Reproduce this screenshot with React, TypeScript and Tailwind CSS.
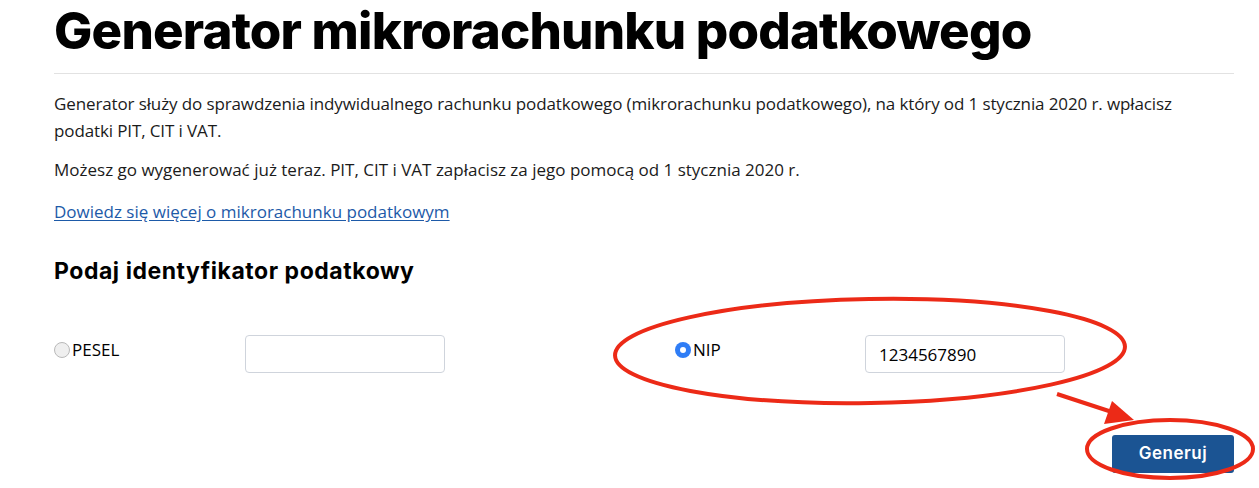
import React, { useState } from "react";

function Radio({ checked }: { checked: boolean }) {
  return checked ? (
    <span className="w-[16px] h-[16px] rounded-full bg-[#2f7df6] flex items-center justify-center shrink-0">
      <span className="w-[6px] h-[6px] rounded-full bg-white" />
    </span>
  ) : (
    <span className="w-[16px] h-[16px] rounded-full border border-[#b9b9b9] bg-[#efefef] shrink-0" />
  );
}

export default function App() {
  const [kind, setKind] = useState<"pesel" | "nip">("nip");
  const [pesel, setPesel] = useState("");
  const [nip, setNip] = useState("1234567890");

  return (
    <div className="relative w-[1259px] h-[488px] overflow-hidden bg-white text-black">
      <div className="w-[1180px] ml-[54px]" style={{ fontFamily: '"Open Sans", "Noto Sans", sans-serif' }}>
        <h1 className="pt-[1px] text-[51px] leading-[60px] font-extrabold tracking-[-0.8px] font-['Inter',sans-serif]">
          Generator mikrorachunku podatkowego
        </h1>
        <hr className="mt-[12px] border-t border-[#e2e2e2]" />

        <p className="mt-[16px] w-[1160px] text-[17px] leading-[27px] tracking-[-0.12px] text-[#1b1b1b]">
          Generator służy do sprawdzenia indywidualnego rachunku podatkowego (mikrorachunku podatkowego), na który od 1 stycznia 2020 r. wpłacisz
          podatki PIT, CIT i VAT.
        </p>
        <p className="mt-[12px] text-[17px] leading-[27px] text-[#1b1b1b]">
          Możesz go wygenerować już teraz. PIT, CIT i VAT zapłacisz za jego pomocą od 1 stycznia 2020 r.
        </p>
        <p className="mt-[15px] text-[17px] leading-[27px]">
          <a href="#" className="text-[#1d5aa8] underline underline-offset-2">Dowiedz się więcej o mikrorachunku podatkowym</a>
        </p>

        <h2 className="mt-[31px] text-[23px] leading-[30px] font-bold tracking-[0.55px] font-['Inter',sans-serif]">Podaj identyfikator podatkowy</h2>

        <div className="mt-[49px] flex items-start">
          <label className="w-[191px] flex items-center pt-[3px] text-[17px] cursor-pointer" onClick={() => setKind("pesel")}>
            <Radio checked={kind === "pesel"} />
            <span className="ml-[2px] leading-[24px]">PESEL</span>
          </label>
          <input
            value={pesel}
            onChange={(e) => setPesel(e.target.value)}
            className="w-[200px] h-[38px] px-[13px] border border-[#cfd4dc] rounded-[4px] text-[17px] outline-none"
          />
          <label className="ml-[230px] w-[190px] flex items-center pt-[3px] text-[17px] cursor-pointer" onClick={() => setKind("nip")}>
            <Radio checked={kind === "nip"} />
            <span className="ml-[2px] leading-[24px]">NIP</span>
          </label>
          <input
            value={nip}
            onChange={(e) => setNip(e.target.value)}
            className="w-[200px] h-[38px] px-[13px] border border-[#cfd4dc] rounded-[4px] text-[17px] outline-none"
          />
        </div>

        <div className="mt-[62px] flex justify-end">
          <button className="w-[122px] h-[38px] rounded-[3px] bg-[#1b5493] text-white text-[17px] tracking-[0.5px] font-semibold font-['Inter',sans-serif]">
            Generuj
          </button>
        </div>
      </div>

      {/* red annotations drawn over the form */}
      <svg className="absolute inset-0 pointer-events-none" width="1259" height="488" viewBox="0 0 1259 488">
        <ellipse cx="870" cy="351" rx="255" ry="52" fill="none" stroke="#ec2a17" strokeWidth="4" transform="rotate(-1 870 351)" />
        <ellipse cx="1170" cy="449" rx="83" ry="29" fill="none" stroke="#ec2a17" strokeWidth="4" />
        <line x1="1057" y1="394" x2="1118" y2="414" stroke="#ec2a17" strokeWidth="4" />
        <polygon points="1112,401 1134,420 1104,424" fill="#ec2a17" />
      </svg>
    </div>
  );
}
